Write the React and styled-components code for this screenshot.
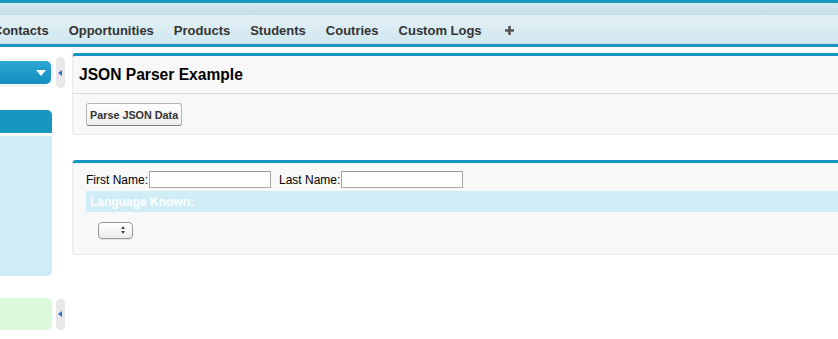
import React from 'react'
import styled, { createGlobalStyle } from 'styled-components'

const GlobalStyle = createGlobalStyle`
  html, body {
    margin: 0;
    padding: 0;
    background: #fff;
    overflow: hidden;
  }
  body {
    font-family: "Liberation Sans", Arial, sans-serif;
    font-size: 12px;
    color: #000;
  }
`

const Page = styled.div`
  width: 838px;
  height: 339px;
  overflow: hidden;
`

const TopLine = styled.div`
  height: 3px;
  background: #1797c0;
`

const Strip = styled.div`
  height: 12px;
  background: linear-gradient(#d4e8ef, #c6dee7);
`

const TabBar = styled.ul`
  display: flex;
  align-items: center;
  height: 27px;
  margin: 0;
  padding: 2px 0 0 0;
  list-style: none;
  background: linear-gradient(#e2f0f5, #d1e7ef);
  border-bottom: 3px solid #1797c0;
`

const Tab = styled.li`
  padding: 0 10px;
  font-size: 13px;
  font-weight: bold;
  color: #333;
  white-space: nowrap;
  &:first-child {
    margin-left: -17px;
  }
`

const PlusTab = styled.li`
  display: flex;
  align-items: center;
  padding: 0 0 0 13px;
`

const Body = styled.div`
  display: flex;
  align-items: flex-start;
`

const Sidebar = styled.div`
  width: 65px;
  padding-top: 10px;
  flex-shrink: 0;
`

const SideRow = styled.div`
  display: flex;
  align-items: center;
  gap: 4px;
  margin-top: ${p => p.$top || 0}px;
`

const Picker = styled.div`
  position: relative;
  width: 52px;
  height: 25px;
  box-sizing: border-box;
  border: 1px solid #fff;
  border-left: none;
  border-radius: 0 6px 6px 0;
  background: linear-gradient(#2ca6d3, #148fbd);
  box-shadow: 0 0 2px rgba(0, 0, 0, 0.25);
  &:after {
    content: '';
    position: absolute;
    right: 5px;
    top: 9px;
    border-left: 5px solid transparent;
    border-right: 5px solid transparent;
    border-top: 6px solid #fff;
  }
`

const Handle = styled.div`
  display: flex;
  align-items: center;
  justify-content: center;
  width: 9px;
  height: ${p => p.$height}px;
  border-radius: 5px;
  background: #e8e8e8;
  &:after {
    content: '';
    border-top: 3px solid transparent;
    border-bottom: 3px solid transparent;
    border-right: 4px solid #2d73c2;
    margin-left: -1px;
  }
`

const Block = styled.div`
  width: 52px;
  height: ${p => p.$height}px;
  margin-top: ${p => p.$top || 0}px;
  background: ${p => p.$bg};
  border-radius: ${p => p.$radius};
`

const Main = styled.div`
  flex: 1;
  margin-left: 7px;
  margin-right: -10px;
  padding-top: 6px;
`

const Panel = styled.div`
  background: #f8f8f8;
  border: 1px solid #eaeaea;
  border-top: 3px solid #1797c0;
  border-radius: 4px;
  margin-bottom: ${p => p.$gap || 0}px;
`

const PanelHead = styled.div`
  height: 37px;
  display: flex;
  align-items: center;
  padding-left: 6px;
  border-bottom: 1px solid #dbdbdb;
`

const Title = styled.h2`
  margin: 0;
  font-size: 15.6px;
  font-weight: bold;
  color: #000;
`

const PanelBody = styled.div`
  padding: 9px 0 8px 13px;
`

const Button = styled.button`
  font-family: "Liberation Sans", Arial, sans-serif;
  font-size: 10.8px;
  font-weight: bold;
  color: #333;
  height: 23px;
  padding: 2px 3px;
  border: 1px solid #b5b5b5;
  border-bottom-color: #7f7f7f;
  border-radius: 3px;
  background: linear-gradient(#fff, #f0f0f0);
`

const FormBody = styled.div`
  padding: 7px 0 15px 13px;
`

const FieldRow = styled.div`
  display: flex;
  align-items: center;
  height: 19px;
`

const Label = styled.label`
  font-size: 12px;
  margin-right: 1px;
`

const TextInput = styled.input`
  width: 122px;
  height: 17px;
  box-sizing: border-box;
  border: 1px solid #aaa;
  border-top-color: #999;
  margin-right: 8px;
  padding: 0;
  background: #fff;
`

const Section = styled.div`
  margin-top: 2px;
  height: 21px;
  display: flex;
  align-items: center;
  padding-left: 4px;
  background: #d0ecf7;
  color: #fff;
  font-weight: bold;
  font-size: 12px;
`

const SelectBox = styled.div`
  position: relative;
  width: 35px;
  height: 17px;
  box-sizing: border-box;
  margin: 10px 0 0 12px;
  border: 1px solid #999;
  border-radius: 4px;
  background: linear-gradient(#fff, #ececec);
  box-shadow: 0 1px 0 rgba(0, 0, 0, 0.08);
  &:before, &:after {
    content: '';
    position: absolute;
    right: 7px;
    border-left: 2.5px solid transparent;
    border-right: 2.5px solid transparent;
  }
  &:before {
    top: 3px;
    border-bottom: 3px solid #444;
  }
  &:after {
    top: 8px;
    border-top: 3px solid #444;
  }
`

const tabs = ['Contacts', 'Opportunities', 'Products', 'Students', 'Coutries', 'Custom Logs']

export default function App() {
  return (
    <Page>
      <GlobalStyle />
      <TopLine />
      <Strip />
      <TabBar>
        {tabs.map(t => (
          <Tab key={t}>{t}</Tab>
        ))}
        <PlusTab>
          <svg width="9" height="9" viewBox="0 0 9 9">
            <path d="M4.5 0v9M0 4.5h9" stroke="#555" strokeWidth="2.6" />
          </svg>
        </PlusTab>
      </TabBar>
      <Body>
        <Sidebar>
          <SideRow>
            <Picker />
            <Handle $height={31} />
          </SideRow>
          <Block $top={22} $height={23} $bg="#1797c0" $radius="0 5px 0 0" />
          <Block $top={3} $height={140} $bg="#d0ecf7" $radius="0 0 5px 0" />
          <SideRow $top={22}>
            <Block $height={32} $bg="#ddf9dd" $radius="0 5px 5px 0" />
            <Handle $height={31} />
          </SideRow>
        </Sidebar>
        <Main>
          <Panel $gap={25}>
            <PanelHead>
              <Title>JSON Parser Example</Title>
            </PanelHead>
            <PanelBody>
              <Button>Parse JSON Data</Button>
            </PanelBody>
          </Panel>
          <Panel>
            <FormBody>
              <FieldRow>
                <Label>First Name:</Label>
                <TextInput />
                <Label>Last Name:</Label>
                <TextInput />
              </FieldRow>
              <Section>Language Known:</Section>
              <SelectBox />
            </FormBody>
          </Panel>
        </Main>
      </Body>
    </Page>
  )
}
